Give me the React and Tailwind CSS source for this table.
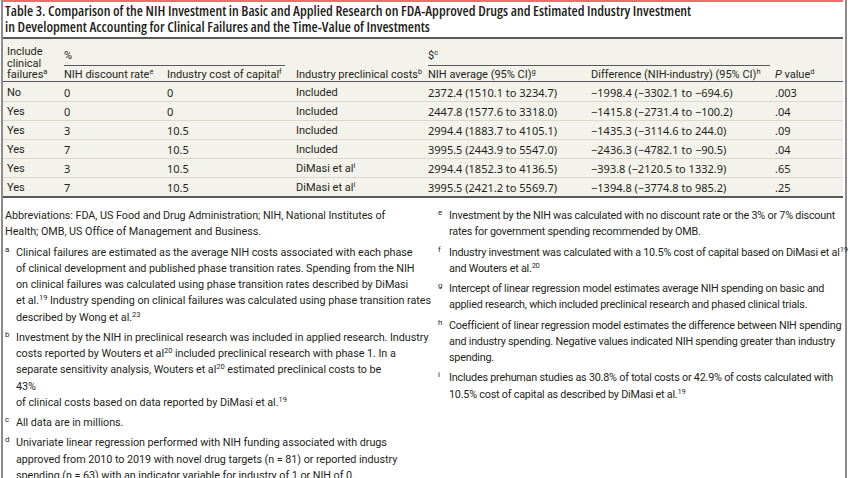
import React from "react";

const rows = [
  ["No", "0", "0", "Included", "2372.4 (1510.1 to 3234.7)", "−1998.4 (−3302.1 to −694.6)", ".003"],
  ["Yes", "0", "0", "Included", "2447.8 (1577.6 to 3318.0)", "−1415.8 (−2731.4 to −100.2)", ".04"],
  ["Yes", "3", "10.5", "Included", "2994.4 (1883.7 to 4105.1)", "−1435.3 (−3114.6 to 244.0)", ".09"],
  ["Yes", "7", "10.5", "Included", "3995.5 (2443.9 to 5547.0)", "−2436.3 (−4782.1 to −90.5)", ".04"],
  ["Yes", "3", "10.5", "DiMasi", "2994.4 (1852.3 to 4136.5)", "−393.8 (−2120.5 to 1332.9)", ".65"],
  ["Yes", "7", "10.5", "DiMasi", "3995.5 (2421.2 to 5569.7)", "−1394.8 (−3774.8 to 985.2)", ".25"],
];

const cols = "grid grid-cols-[61px_103px_129px_132px_163px_184px_1fr]";
const num = { fontFamily: '"Noto Sans", "Open Sans", sans-serif' };

const Sup = ({ children }) => (
  <span className="text-[7.5px] relative -top-[4px] align-baseline leading-none">{children}</span>
);

// each footnote keeps the line breaks of the printed table
function Note({ mark, lines }) {
  return (
    <div className={`relative mb-[4px] whitespace-nowrap ${mark ? "pl-[11px]" : ""}`}>
      {mark && <span className="absolute left-[0px] top-[-3px] text-[8px]">{mark}</span>}
      {lines.map((l, i) => (
        <div key={i}>{l}</div>
      ))}
    </div>
  );
}

export default function App() {
  return (
    <div
      className="w-[850px] h-[478px] overflow-hidden bg-white text-[#231f20] pl-[1px] pr-[3px]"
      style={{ fontFamily: '"Roboto", "Liberation Sans", sans-serif' }}
    >
      <div className="h-full border-l-[2px] border-r-[2px] border-[#8c8c8c]">
        <div className="mr-[2px] h-full">
          <div className="h-[2px] bg-[#f26b6b]" />
          <h1
            className="pl-[2px] pt-[1px] pb-[2px] text-[14.2px] leading-[16px] font-semibold font-stretch-condensed whitespace-nowrap"
            style={{ fontFamily: '"Open Sans", "Noto Sans", sans-serif' }}
          >
            Table 3. Comparison of the NIH Investment in Basic and Applied Research on FDA-Approved Drugs and Estimated Industry Investment
            <br />
            in Development Accounting for Clinical Failures and the Time-Value of Investments
          </h1>

          <div className="bg-[#f4f3eb]">
            <div className={`${cols} border-t-[2px] border-b border-[#58595b] text-[11px] leading-[12px] h-[45px] whitespace-nowrap`}>
              <div className="row-span-2 flex flex-col justify-end pl-[4px]">
                <div className="h-[11.5px] leading-[11.5px]">Include</div>
                <div className="h-[11.5px] leading-[11.5px]">clinical</div>
                <div className="h-[12px] leading-[12px]">
                  failures<Sup>a</Sup>
                </div>
              </div>
              <div className="col-span-2 col-start-2 row-start-1 pt-[11px] pr-[11px]">
                <div className="border-b border-[#58595b] pb-[3px]">%</div>
              </div>
              <div className="col-span-2 col-start-5 row-start-1 pt-[11px] pr-[5px]">
                <div className="border-b border-[#58595b] pb-[3px]">
                  $<Sup>c</Sup>
                </div>
              </div>
              <div className="col-start-2 row-start-2 self-end">NIH discount rate<Sup>e</Sup></div>
              <div className="col-start-3 row-start-2 self-end">Industry cost of capital<Sup>f</Sup></div>
              <div className="col-start-4 row-start-2 self-end">Industry preclinical costs<Sup>b</Sup></div>
              <div className="col-start-5 row-start-2 self-end">NIH average (95% CI)<Sup>g</Sup></div>
              <div className="col-start-6 row-start-2 self-end">Difference (NIH-industry) (95% CI)<Sup>h</Sup></div>
              <div className="col-start-7 row-start-2 self-end">
                <i>P</i> value<Sup>d</Sup>
              </div>
            </div>

            <div className="border-b-[2px] border-[#58595b] text-[11px] whitespace-nowrap">
              {rows.map((r, i) => (
                <div
                  key={i}
                  className={`${cols} h-[19px] items-center pt-[2px] leading-[14px] ${i > 0 ? "border-t border-[#dcd9cc]" : ""}`}
                >
                  <div className="pl-[4px]">{r[0]}</div>
                  <div style={num}>{r[1]}</div>
                  <div style={num}>{r[2]}</div>
                  <div>
                    {r[3] === "DiMasi" ? (
                      <>
                        DiMasi et al<Sup>i</Sup>
                      </>
                    ) : (
                      r[3]
                    )}
                  </div>
                  <div style={num}>{r[4]}</div>
                  <div style={num}>{r[5]}</div>
                  <div style={num}>{r[6]}</div>
                </div>
              ))}
            </div>
          </div>

          <div className="grid grid-cols-[433px_1fr] pt-[10px] text-[10.8px] leading-[16.25px]">
            <div className="pl-[2px] tracking-[-0.05px]">
              <Note
                lines={[
                  "Abbreviations: FDA, US Food and Drug Administration; NIH, National Institutes of",
                  "Health; OMB, US Office of Management and Business.",
                ]}
              />
              <Note
                mark="a"
                lines={[
                  "Clinical failures are estimated as the average NIH costs associated with each phase",
                  "of clinical development and published phase transition rates. Spending from the NIH",
                  "on clinical failures was calculated using phase transition rates described by DiMasi",
                  <>
                    et al.<Sup>19</Sup> Industry spending on clinical failures was calculated using phase transition rates
                  </>,
                  <>
                    described by Wong et al.<Sup>23</Sup>
                  </>,
                ]}
              />
              <Note
                mark="b"
                lines={[
                  "Investment by the NIH in preclinical research was included in applied research. Industry",
                  <>
                    costs reported by Wouters et al<Sup>20</Sup> included preclinical research with phase 1. In a
                  </>,
                  <>
                    separate sensitivity analysis, Wouters et al<Sup>20</Sup> estimated preclinical costs to be
                  </>,
                  "43%",
                  <>
                    of clinical costs based on data reported by DiMasi et al.<Sup>19</Sup>
                  </>,
                ]}
              />
              <Note mark="c" lines={["All data are in millions."]} />
              <Note
                mark="d"
                lines={[
                  "Univariate linear regression performed with NIH funding associated with drugs",
                  "approved from 2010 to 2019 with novel drug targets (n = 81) or reported industry",
                  "spending (n = 63) with an indicator variable for industry of 1 or NIH of 0.",
                ]}
              />
            </div>
            <div className="pl-[2px] tracking-[-0.22px]">
              <Note
                mark="e"
                lines={[
                  "Investment by the NIH was calculated with no discount rate or the 3% or 7% discount",
                  "rates for government spending recommended by OMB.",
                ]}
              />
              <Note
                mark="f"
                lines={[
                  <>
                    Industry investment was calculated with a 10.5% cost of capital based on DiMasi et al<Sup>19</Sup>
                  </>,
                  <>
                    and Wouters et al.<Sup>20</Sup>
                  </>,
                ]}
              />
              <Note
                mark="g"
                lines={[
                  "Intercept of linear regression model estimates average NIH spending on basic and",
                  "applied research, which included preclinical research and phased clinical trials.",
                ]}
              />
              <Note
                mark="h"
                lines={[
                  "Coefficient of linear regression model estimates the difference between NIH spending",
                  "and industry spending. Negative values indicated NIH spending greater than industry",
                  "spending.",
                ]}
              />
              <Note
                mark="i"
                lines={[
                  "Includes prehuman studies as 30.8% of total costs or 42.9% of costs calculated with",
                  <>
                    10.5% cost of capital as described by DiMasi et al.<Sup>19</Sup>
                  </>,
                ]}
              />
            </div>
          </div>
        </div>
      </div>
    </div>
  );
}
